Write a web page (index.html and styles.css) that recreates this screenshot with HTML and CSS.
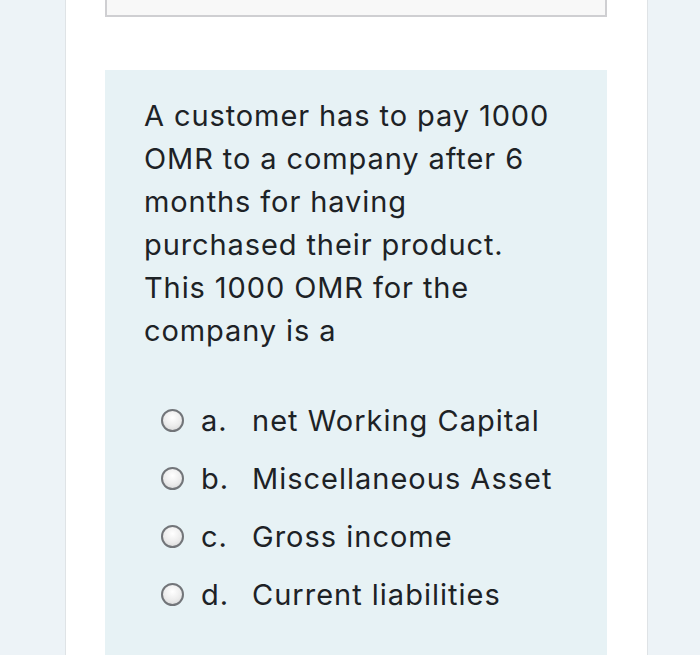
FILE: index.html
```html
<!DOCTYPE html>
<html>
<head>
<meta charset="utf-8">
<link rel="stylesheet" href="styles.css">
</head>
<body>
<div class="page">
  <div class="prev-box"></div>
  <div class="question">
    <div class="qtext">A customer has to pay 1000<br>OMR to a company after 6<br>months for having<br>purchased their product.<br>This 1000 OMR for the<br>company is a</div>
    <div class="answers">
      <div class="opt"><span class="radio"></span><span class="letter">a.</span><span class="label">net Working Capital</span></div>
      <div class="opt"><span class="radio"></span><span class="letter">b.</span><span class="label">Miscellaneous Asset</span></div>
      <div class="opt"><span class="radio"></span><span class="letter">c.</span><span class="label">Gross income</span></div>
      <div class="opt"><span class="radio"></span><span class="letter">d.</span><span class="label">Current liabilities</span></div>
    </div>
  </div>
</div>
</body>
</html>
```
FILE: styles.css
```css
html, body {
  margin: 0;
  padding: 0;
  height: 100%;
  overflow: hidden;
}
body {
  background: #edf3f7;
  font-family: "Inter", "Noto Sans", sans-serif;
  color: #1d2226;
}
.page {
  margin-left: 65px;
  width: 583px;
  height: 100%;
  background: #ffffff;
  border-left: 1px solid #dfe3e6;
  border-right: 1px solid #dfe3e6;
  padding: 0 40px 0 39px;
  box-sizing: border-box;
  overflow: hidden;
}
.prev-box {
  height: 15px;
  background: #f8f8f8;
  border: 2px solid #cfcfd2;
  border-top: none;
}
.question {
  margin-top: 53px;
  background: #e7f2f5;
  padding: 24px 20px 0 39px;
  height: 585px;
  box-sizing: border-box;
  overflow: hidden;
}
.qtext {
  font-size: 29px;
  line-height: 43px;
  letter-spacing: 0.9px;
  white-space: nowrap;
}
.answers {
  margin-top: 39px;
  padding-left: 17px;
  display: flex;
  flex-direction: column;
}
.opt {
  display: flex;
  align-items: center;
  height: 58px;
  font-size: 29px;
  letter-spacing: 1px;
}
.radio {
  width: 19px;
  height: 19px;
  border-radius: 50%;
  border: 2px solid #727579;
  background: radial-gradient(circle at 50% 35%, #ffffff 0%, #ececec 55%, #d2d2d2 100%);
  flex: none;
  margin-right: 17px;
}
.letter {
  width: 51px;
  flex: none;
}
```
